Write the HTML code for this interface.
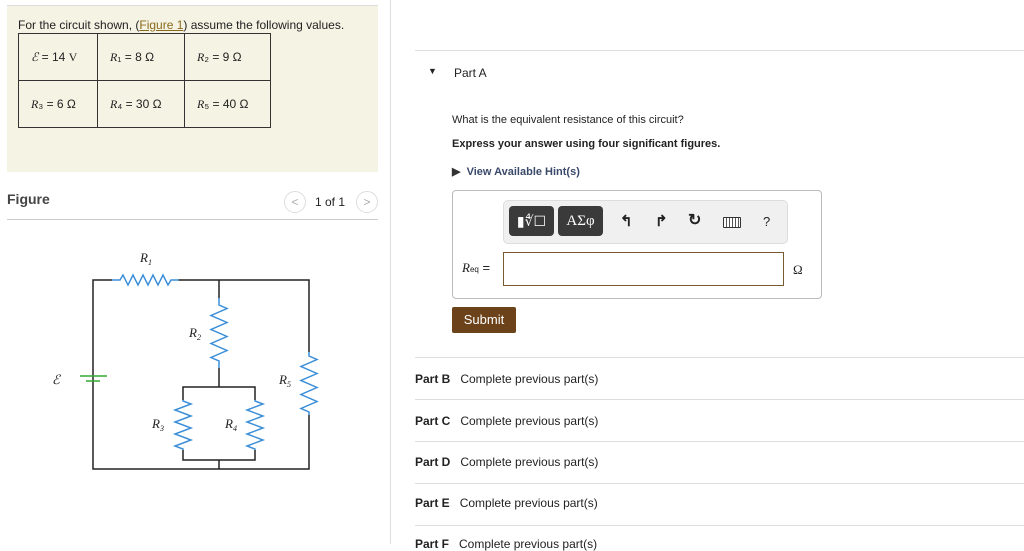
<!DOCTYPE html><html><head><style>
body{margin:0;width:1024px;height:544px;overflow:hidden;background:#fff;font-family:"Liberation Sans",sans-serif;position:relative;color:#222}
.a{position:absolute}
.m{font-family:"Liberation Serif",serif;font-style:italic}
td{border:1px solid #333;font-size:12px;padding:0 0 0 12px;height:46px}
.sep{position:absolute;left:415px;width:609px;height:1px;background:#ddd}
.pt{position:absolute;left:415px;font-size:12px}
</style></head><body>
<div class="a" style="left:7px;top:5px;width:371px;height:166px;background:#f5f3e4;border-top:1px solid #ddd"></div>
<div class="a" style="left:18px;top:18px;font-size:12px">For the circuit shown, (<span style="color:#8a6a1c;text-decoration:underline">Figure 1</span>) assume the following values.</div>
<table class="a" style="left:18px;top:33px;border-collapse:collapse;width:253px">
<tr><td style="width:66px"><span class="m">ℰ</span> = 14 <span style="font-family:Liberation Serif">V</span></td><td style="width:74px"><span class="m">R</span>₁ = 8 Ω</td><td><span class="m">R</span>₂ = 9 Ω</td></tr>
<tr><td><span class="m">R</span>₃ = 6 Ω</td><td><span class="m">R</span>₄ = 30 Ω</td><td><span class="m">R</span>₅ = 40 Ω</td></tr></table>
<div class="a" style="left:7px;top:191px;font-size:14px;font-weight:bold;color:#444">Figure</div>
<div class="a" style="left:284px;top:191px;width:20px;height:20px;border:1px solid #ddd;border-radius:50%;color:#aaa;font-size:12px;text-align:center;line-height:20px">&lt;</div>
<div class="a" style="left:315px;top:195px;font-size:12px">1 of 1</div>
<div class="a" style="left:356px;top:191px;width:20px;height:20px;border:1px solid #ddd;border-radius:50%;color:#aaa;font-size:12px;text-align:center;line-height:20px">&gt;</div>
<div class="a" style="left:7px;top:219px;width:371px;height:1px;background:#ccc"></div>
<div class="a" style="left:390px;top:0;width:1px;height:544px;background:#ddd"></div>
<svg class="a" style="left:0;top:0" width="390" height="544">
<g stroke="#222" stroke-width="1.5" fill="none">
<path d="M112 280H93V469H309V415M309 352V280H178M219 280V298M219 368V387M183 400V387H255V400M183 450V460H255V450M219 460V469"/></g>
<g stroke="#3b8fd8" stroke-width="1.5" fill="none">
<path d="M112 280H120l3-5 5 10 5-10 5 10 5-10 5 10 5-10 5 10 5-10 5 10 3-5h8"/>
<path d="M219 298v7l8 3.5-16 7 16 7-16 7 16 7-16 7 16 7-16 7 8 3.5v7"/>
<path d="M309 352v4l8 3.5-16 7 16 7-16 7 16 7-16 7 16 7-16 7 8 3.5v3"/>
<path d="M183 400v1l8 3-16 6 16 6-16 6 16 6-16 6 16 6-16 6 8 3v1"/>
<path d="M255 400v1l8 3-16 6 16 6-16 6 16 6-16 6 16 6-16 6 8 3v1"/></g>
<g stroke="#3a3" stroke-width="1.5"><path d="M80 376H107M86 381H100"/></g>
<g font-family="Liberation Serif" font-style="italic" font-size="13" fill="#222">
<text x="140" y="262">R<tspan font-size="8" dy="3">1</tspan></text>
<text x="189" y="337">R<tspan font-size="8" dy="3">2</tspan></text>
<text x="279" y="384">R<tspan font-size="8" dy="3">5</tspan></text>
<text x="152" y="428">R<tspan font-size="8" dy="3">3</tspan></text>
<text x="225" y="428">R<tspan font-size="8" dy="3">4</tspan></text>
<text x="52" y="384">ℰ</text></g></svg>
<div class="sep" style="top:50px"></div>
<div class="a" style="left:428px;top:66px;font-size:9px">▼</div>
<div class="a" style="left:454px;top:66px;font-size:12px">Part A</div>
<div class="a" style="left:452px;top:114px;font-size:11px">What is the equivalent resistance of this circuit?</div>
<div class="a" style="left:452px;top:138px;font-size:11px;font-weight:bold">Express your answer using four significant figures.</div>
<div class="a" style="left:452px;top:165px;font-size:11px;font-weight:bold;color:#333">▶&nbsp; <span style="color:#3a4a6a">View Available Hint(s)</span></div>
<div class="a" style="left:452px;top:190px;width:368px;height:107px;border:1px solid #bbb;border-radius:4px"></div>
<div class="a" style="left:503px;top:200px;width:283px;height:42px;background:#f0f0f0;border:1px solid #ddd;border-radius:5px"></div>
<div class="a" style="left:509px;top:206px;width:45px;height:30px;background:#3a3a3a;border-radius:4px;color:#fff;font-size:14px;line-height:30px;text-align:center">▮∜☐</div>
<div class="a" style="left:558px;top:206px;width:45px;height:30px;background:#3a3a3a;border-radius:4px;color:#fff;font-family:Liberation Serif;font-size:15px;line-height:30px;text-align:center">ΑΣφ</div>
<div class="a" style="left:620px;top:212px;font-size:15px;font-weight:bold">↰</div>
<div class="a" style="left:655px;top:212px;font-size:15px;font-weight:bold">↱</div>
<div class="a" style="left:688px;top:210px;font-size:16px;font-weight:bold">↻</div>
<div class="a" style="left:723px;top:217px;width:16px;height:9px;border:1px solid #333;border-radius:1px;background:repeating-linear-gradient(90deg,#fff 0 2px,#555 2px 3px)"></div>
<div class="a" style="left:763px;top:214px;font-size:13px">?</div>
<div class="a" style="left:462px;top:260px;font-size:13px"><span class="m">R</span><span style="font-size:8px">eq</span> =</div>
<div class="a" style="left:503px;top:252px;width:279px;height:32px;border:1px solid #7a5a30"></div>
<div class="a" style="left:793px;top:262px;font-size:13px;font-family:Liberation Serif">Ω</div>
<div class="a" style="left:452px;top:307px;width:64px;height:26px;background:#6b4219;border-radius:2px;color:#fff;font-size:13px;line-height:26px;text-align:center">Submit</div>
<div class="sep" style="top:357px"></div>
<div class="pt" style="top:372px"><b>Part B</b>&nbsp;&nbsp; Complete previous part(s)</div>
<div class="sep" style="top:399px"></div>
<div class="pt" style="top:414px"><b>Part C</b>&nbsp;&nbsp; Complete previous part(s)</div>
<div class="sep" style="top:441px"></div>
<div class="pt" style="top:455px"><b>Part D</b>&nbsp;&nbsp; Complete previous part(s)</div>
<div class="sep" style="top:483px"></div>
<div class="pt" style="top:496px"><b>Part E</b>&nbsp;&nbsp; Complete previous part(s)</div>
<div class="sep" style="top:525px"></div>
<div class="pt" style="top:537px"><b>Part F</b>&nbsp;&nbsp; Complete previous part(s)</div>
</body></html>
